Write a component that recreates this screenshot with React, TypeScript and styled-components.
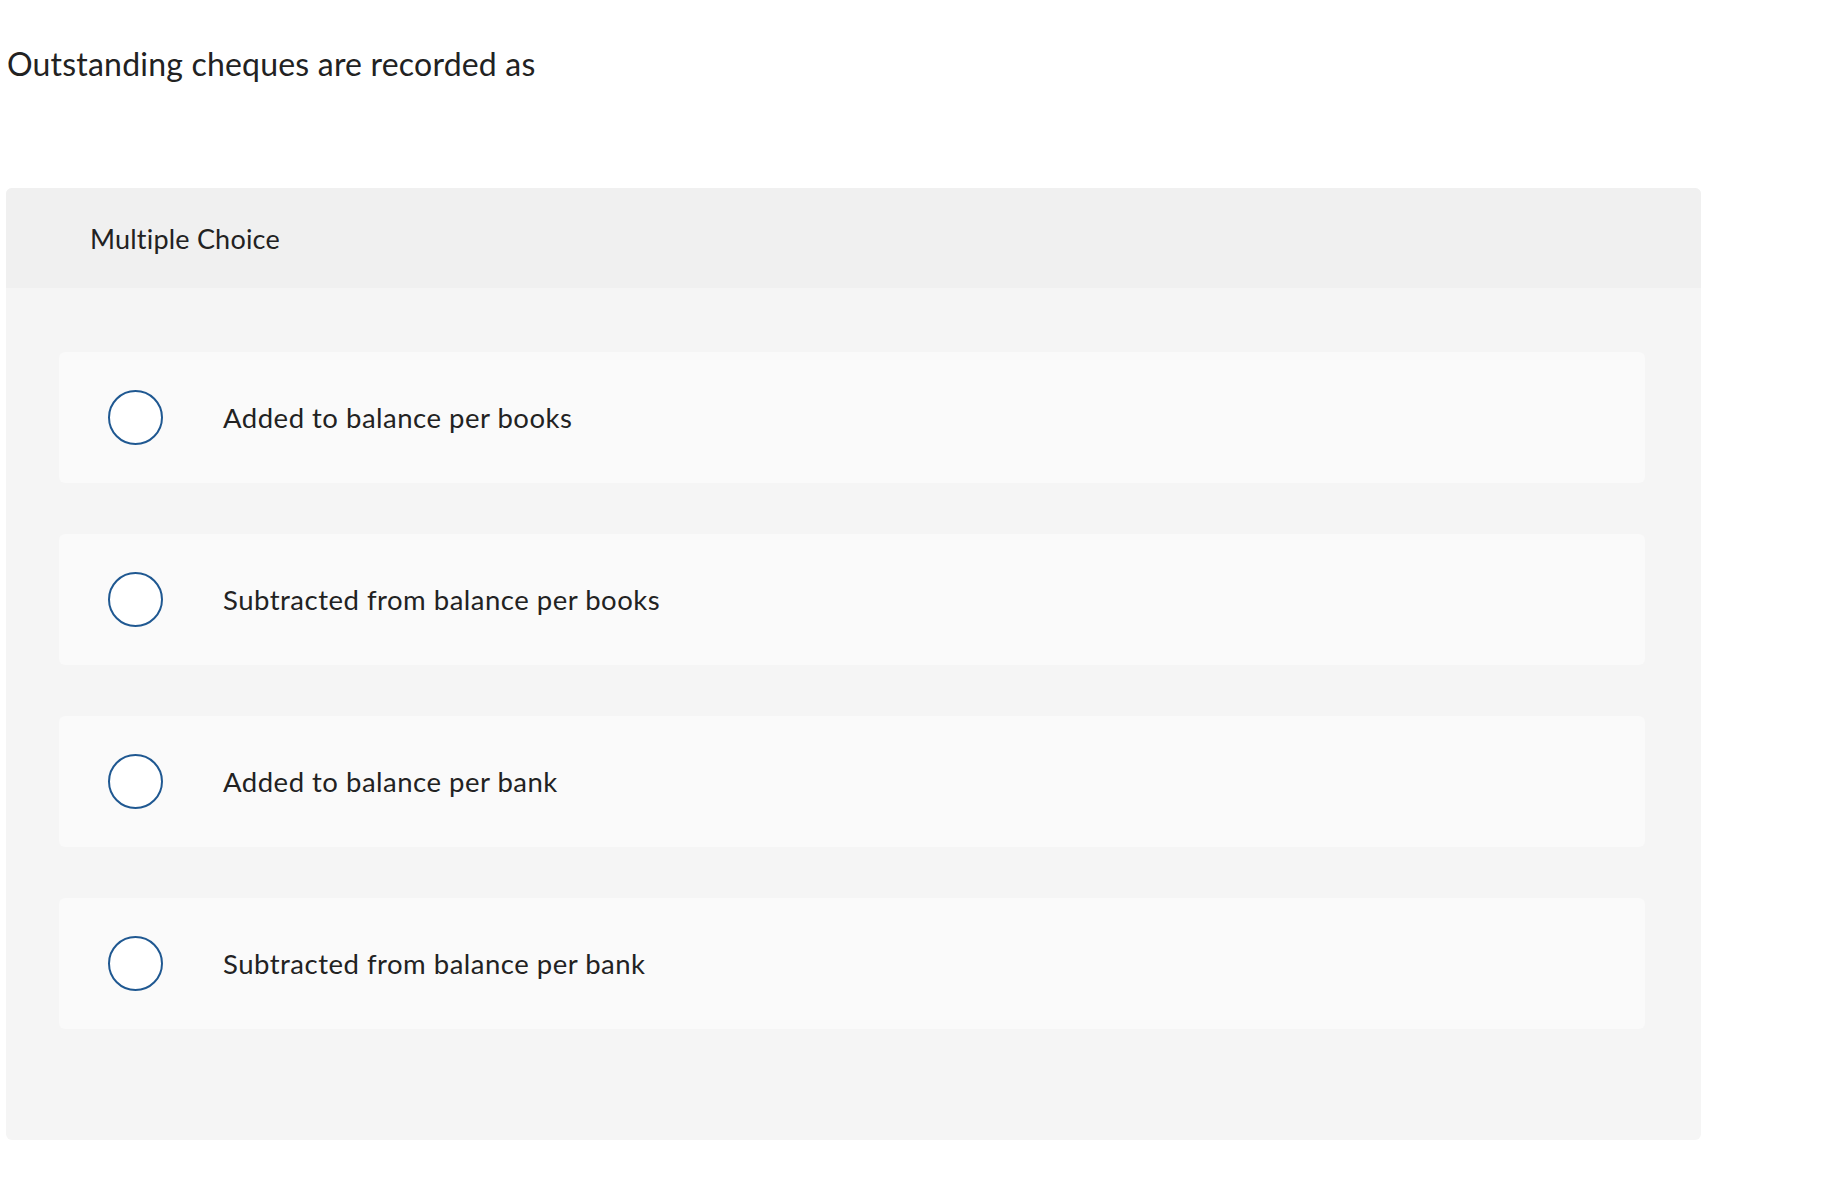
import styled, { createGlobalStyle } from "styled-components";

const GlobalStyle = createGlobalStyle`
  html, body {
    margin: 0;
    padding: 0;
    background: #ffffff;
  }
  body {
    font-family: Lato, "Open Sans", "Liberation Sans", sans-serif;
    color: #222222;
  }
`;

const options = [
  "Added to balance per books",
  "Subtracted from balance per books",
  "Added to balance per bank",
  "Subtracted from balance per bank",
];

const App = () => {
  return (
    <>
      <GlobalStyle />
      <Page>
        <Question>Outstanding cheques are recorded as</Question>
        <Panel>
          <PanelHeader>Multiple Choice</PanelHeader>
          <OptionList>
            {options.map((label) => (
              <OptionCard key={label}>
                <Radio />
                <OptionLabel>{label}</OptionLabel>
              </OptionCard>
            ))}
          </OptionList>
        </Panel>
      </Page>
    </>
  );
};

export default App;

const Page = styled.main`
  width: 1695px;
  padding: 0 0 0 6px;
`;

const Question = styled.h1`
  margin: 44px 0 104px 1px;
  font-size: 32px;
  line-height: 40px;
  font-weight: 400;
  letter-spacing: 0.2px;
  color: #222222;
`;

const Panel = styled.section`
  border-radius: 6px;
  overflow: hidden;
  background: #f5f5f5;
`;

const PanelHeader = styled.header`
  height: 100px;
  display: flex;
  align-items: center;
  padding-left: 84px;
  background: #f0f0f0;
  font-size: 27px;
  letter-spacing: 0.2px;
  color: #222222;
`;

const OptionList = styled.div`
  display: flex;
  flex-direction: column;
  gap: 51px;
  padding: 64px 56px 111px 53px;
`;

const OptionCard = styled.label`
  height: 131px;
  display: flex;
  align-items: center;
  gap: 60px;
  padding-left: 49px;
  border-radius: 6px;
  background: #fafafa;
  cursor: pointer;
`;

const Radio = styled.span`
  width: 51px;
  height: 51px;
  flex: none;
  border: 2px solid #1f5891;
  border-radius: 50%;
  background: #ffffff;
`;

const OptionLabel = styled.span`
  font-size: 27.5px;
  letter-spacing: 0.5px;
  color: #222222;
`;
